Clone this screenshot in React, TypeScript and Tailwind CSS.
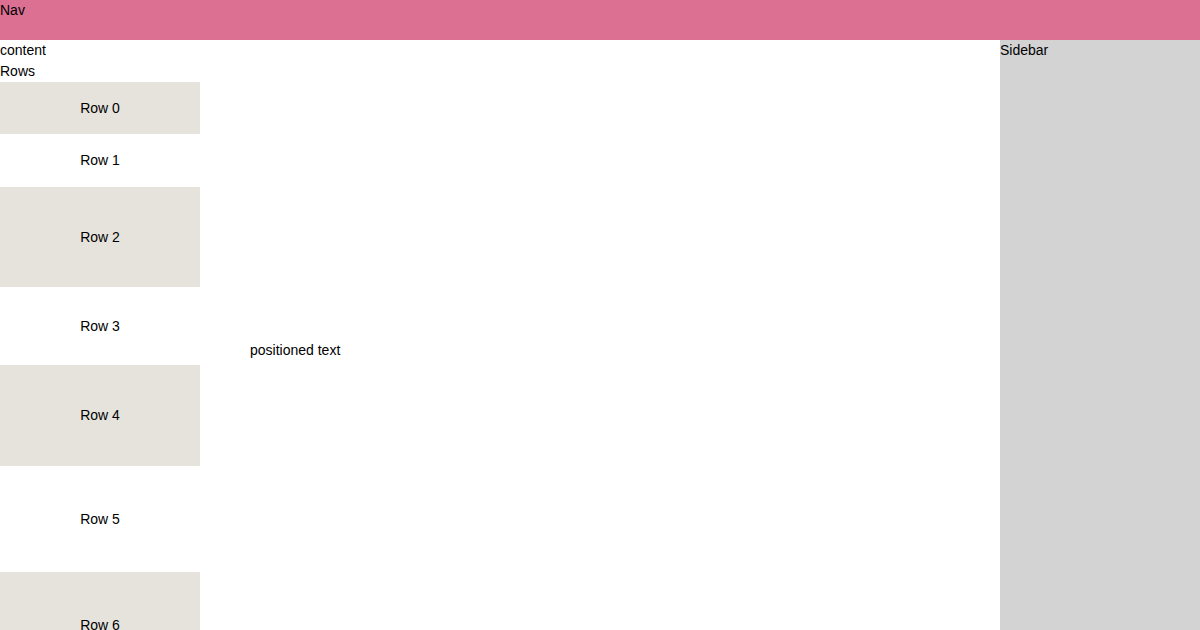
const rows = [
  { label: "Row 0", h: "h-[52px]", shaded: true },
  { label: "Row 1", h: "h-[53px]", shaded: false },
  { label: "Row 2", h: "h-[100px]", shaded: true },
  { label: "Row 3", h: "h-[78px]", shaded: false },
  { label: "Row 4", h: "h-[101px]", shaded: true },
  { label: "Row 5", h: "h-[106px]", shaded: false },
  { label: "Row 6", h: "h-[106px]", shaded: true },
]

export default function App() {
  return (
    <div className="min-h-screen font-['Liberation_Sans',Arial,sans-serif] text-[14px] leading-[21px] text-black bg-white">
      {/* Nav */}
      <nav className="h-10 bg-[#db7093]">Nav</nav>

      <div className="flex">
        {/* Main content */}
        <main className="relative flex-1">
          <div>content</div>
          <div>Rows</div>
          <div className="w-[200px]">
            {rows.map((row) => (
              <div
                key={row.label}
                className={`flex items-center justify-center ${row.h} ${row.shaded ? "bg-[#e6e3dd]" : "bg-white"}`}
              >
                {row.label}
              </div>
            ))}
          </div>
          <span className="absolute left-[250px] top-[300px]">positioned text</span>
        </main>

        {/* Sidebar */}
        <aside className="w-[200px] shrink-0 bg-[#d3d3d3]">Sidebar</aside>
      </div>
    </div>
  )
}
